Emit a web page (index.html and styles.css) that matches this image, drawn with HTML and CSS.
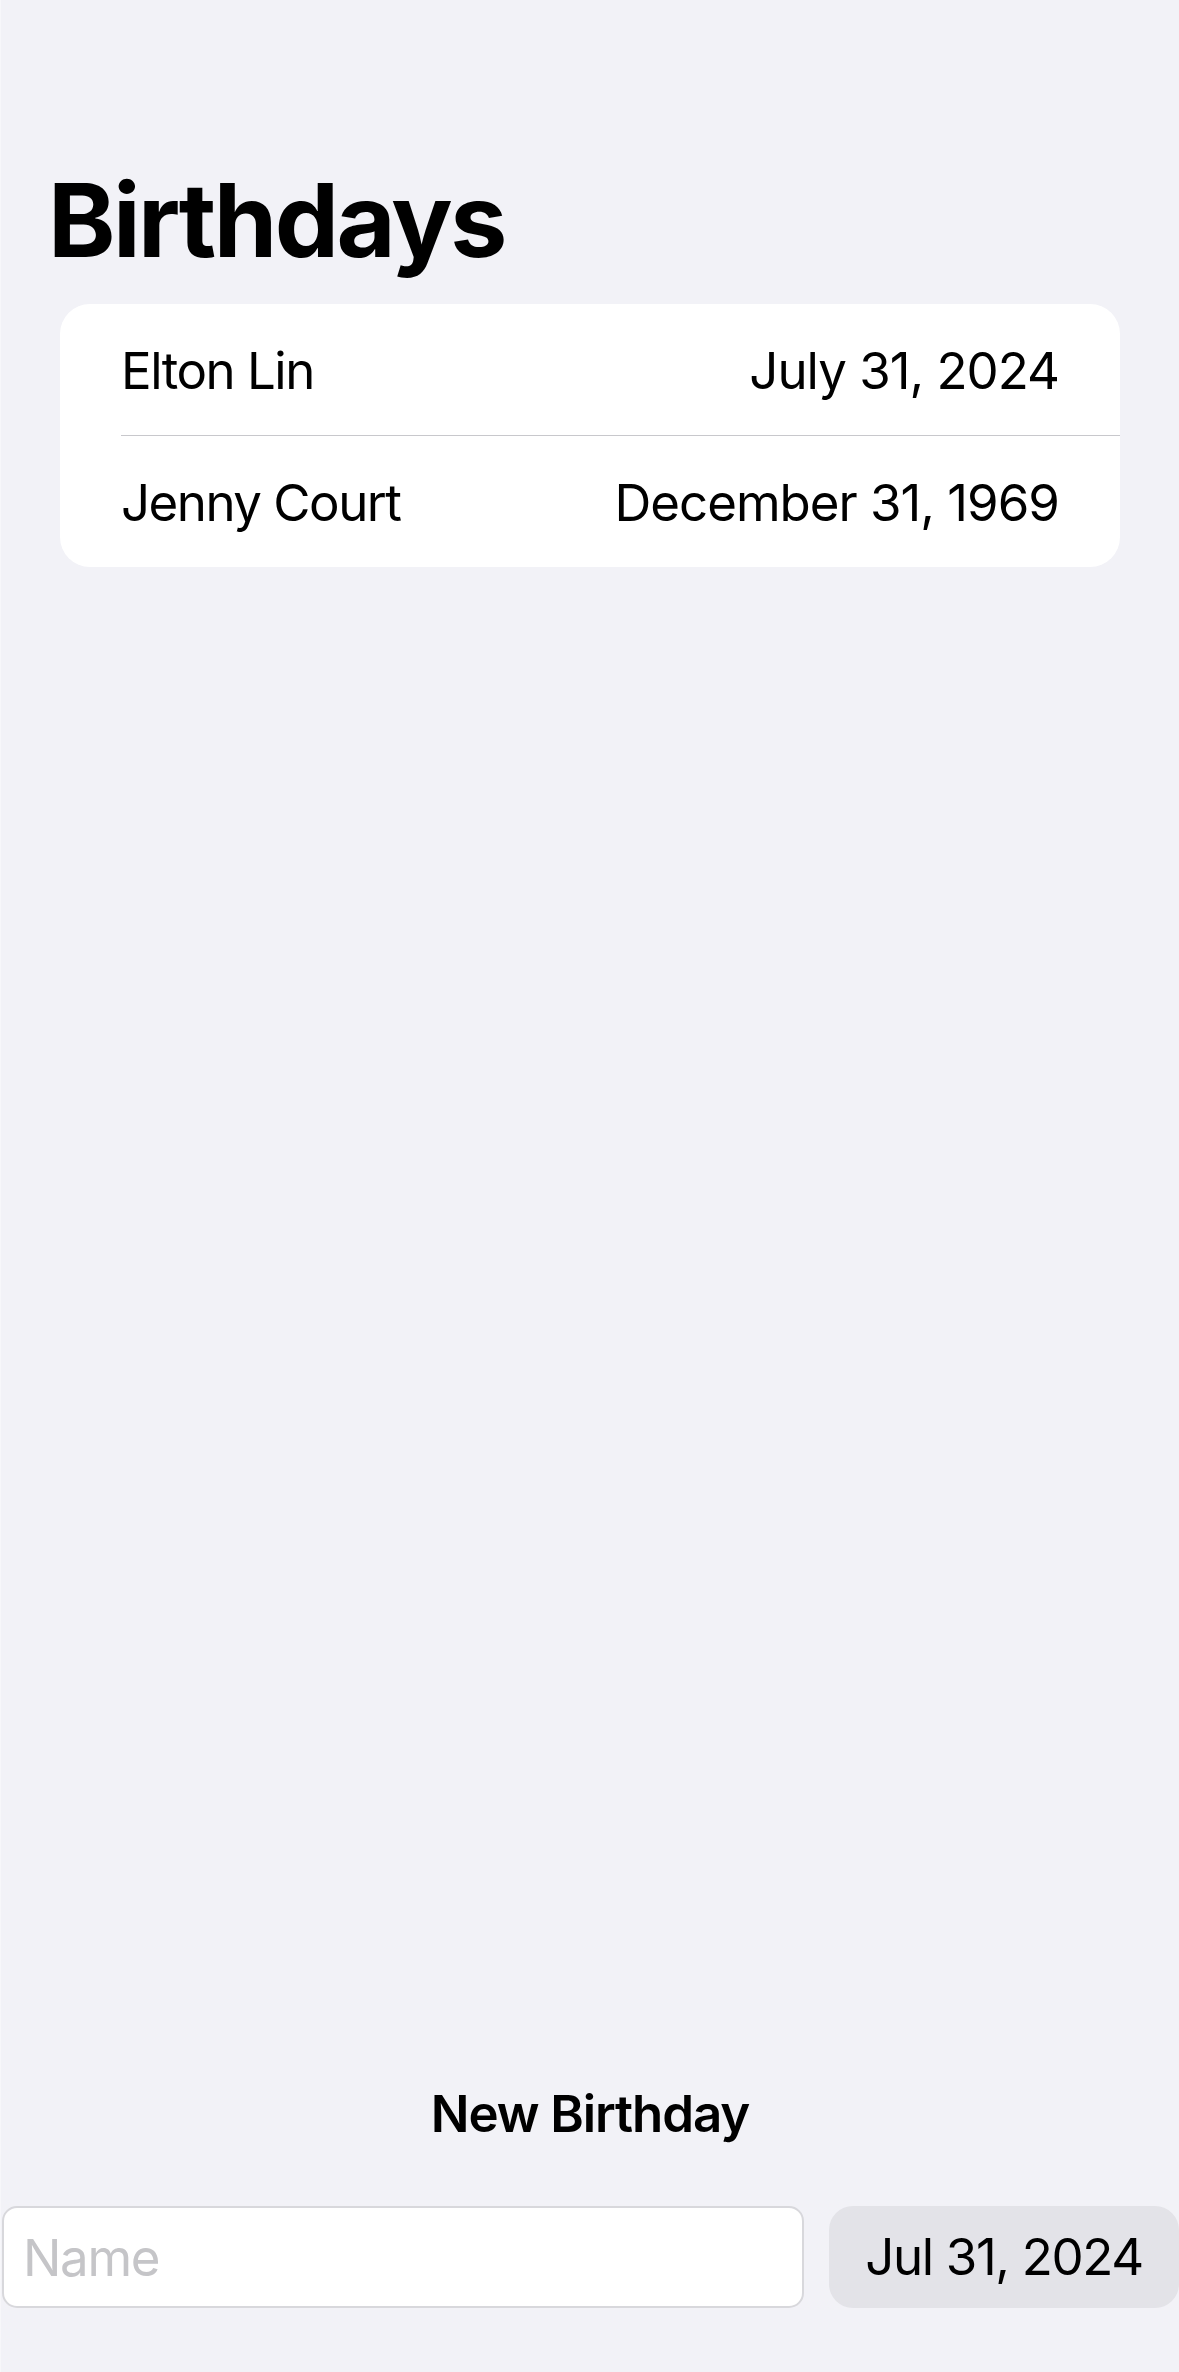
FILE: index.html
```html
<!DOCTYPE html>
<html lang="en">
<head>
<meta charset="utf-8">
<title>Birthdays</title>
<link rel="stylesheet" href="styles.css">
</head>
<body>
<div class="screen">
  <header class="nav">
    <h1 class="large-title">Birthdays</h1>
  </header>
  <section class="list-card">
    <div class="row">
      <span class="row-name">Elton Lin</span>
      <span class="row-date">July 31, 2024</span>
    </div>
    <div class="separator"></div>
    <div class="row">
      <span class="row-name">Jenny Court</span>
      <span class="row-date">December 31, 1969</span>
    </div>
  </section>
  <div class="spacer"></div>
  <footer class="composer">
    <h2 class="composer-title">New Birthday</h2>
    <div class="composer-row">
      <input class="name-field" type="text" placeholder="Name">
      <button class="date-button" type="button">Jul 31, 2024</button>
    </div>
  </footer>
</div>
</body>
</html>
```

FILE: styles.css
```css
* {
  box-sizing: border-box;
}

html, body {
  margin: 0;
  padding: 0;
}

body {
  background: #f2f2f7;
  font-family: Inter, "Noto Sans", "Liberation Sans", sans-serif;
  color: #000;
}

.screen {
  width: 1179px;
  height: 2372px;
  display: flex;
  flex-direction: column;
  border-left: 1px solid #f7f7fa;
  overflow: hidden;
}

.nav {
  padding: 159px 0 0 47px;
}

.large-title {
  margin: 0;
  font-size: 102px;
  line-height: 122px;
  font-weight: 700;
  letter-spacing: -2.6px;
}

.list-card {
  margin: 23px 59px 0 59px;
  background: #fff;
  border-radius: 30px;
  overflow: hidden;
}

.row {
  display: flex;
  justify-content: space-between;
  align-items: baseline;
  padding: 36px 61px 33px 61px;
  font-size: 51px;
  line-height: 62px;
  letter-spacing: -1.5px;
}

.row-date {
  letter-spacing: -1px;
}

.separator {
  height: 1px;
  margin-left: 61px;
  background: #c8c8cc;
}

.spacer {
  flex: 1;
}

.composer {
  display: flex;
  flex-direction: column;
  align-items: center;
  padding-bottom: 64px;
}

.composer-title {
  margin: 0 0 61px 0;
  font-size: 51px;
  line-height: 62px;
  font-weight: 600;
  letter-spacing: -1.1px;
}

.composer-row {
  display: flex;
  align-items: center;
  gap: 25px;
  width: 100%;
  padding-left: 1px;
}

.name-field {
  width: 802px;
  height: 102px;
  margin: 0;
  padding: 0 0 0 19px;
  border: 2px solid #d8d8dc;
  border-radius: 15px;
  background: #fff;
  font-family: inherit;
  font-size: 51px;
  line-height: 62px;
  letter-spacing: -1.3px;
  color: #000;
  outline: none;
}

.name-field::placeholder {
  color: #c5c5c8;
}

.date-button {
  width: 350px;
  height: 102px;
  margin: 0;
  padding: 0;
  border: none;
  border-radius: 24px;
  background: #e3e3e8;
  font-family: inherit;
  font-size: 51px;
  line-height: 62px;
  letter-spacing: -1.35px;
  color: #000;
  text-align: center;
  flex-shrink: 0;
}
```
